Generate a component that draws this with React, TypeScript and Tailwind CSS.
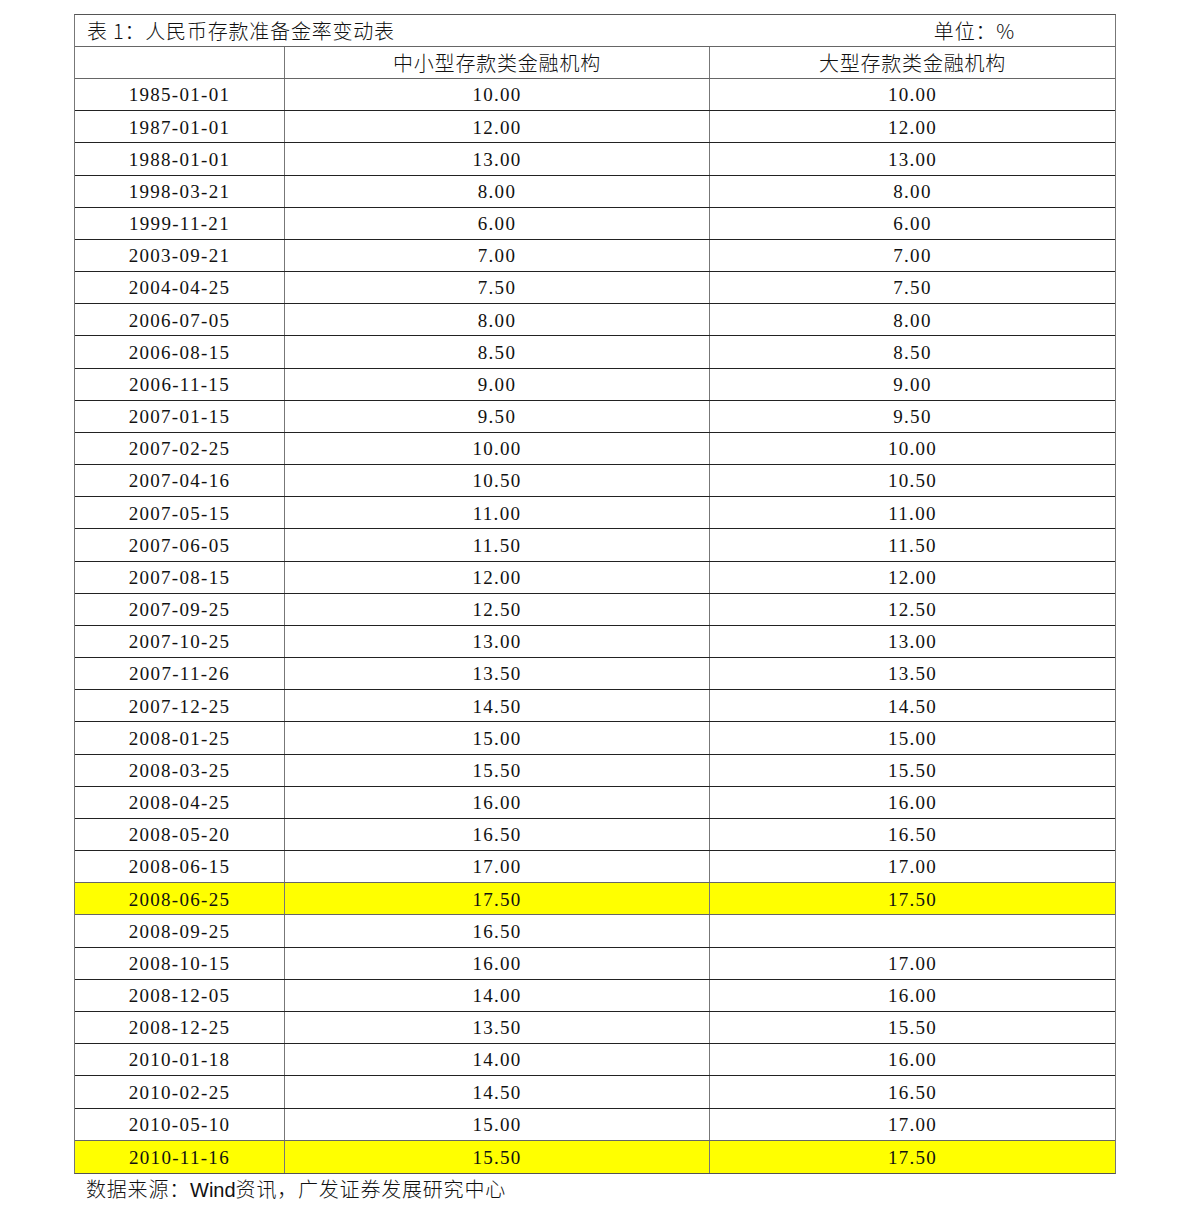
import React from "react";

const rows: [string, string, string, boolean?][] = [
  ["1985-01-01", "10.00", "10.00"],
  ["1987-01-01", "12.00", "12.00"],
  ["1988-01-01", "13.00", "13.00"],
  ["1998-03-21", "8.00", "8.00"],
  ["1999-11-21", "6.00", "6.00"],
  ["2003-09-21", "7.00", "7.00"],
  ["2004-04-25", "7.50", "7.50"],
  ["2006-07-05", "8.00", "8.00"],
  ["2006-08-15", "8.50", "8.50"],
  ["2006-11-15", "9.00", "9.00"],
  ["2007-01-15", "9.50", "9.50"],
  ["2007-02-25", "10.00", "10.00"],
  ["2007-04-16", "10.50", "10.50"],
  ["2007-05-15", "11.00", "11.00"],
  ["2007-06-05", "11.50", "11.50"],
  ["2007-08-15", "12.00", "12.00"],
  ["2007-09-25", "12.50", "12.50"],
  ["2007-10-25", "13.00", "13.00"],
  ["2007-11-26", "13.50", "13.50"],
  ["2007-12-25", "14.50", "14.50"],
  ["2008-01-25", "15.00", "15.00"],
  ["2008-03-25", "15.50", "15.50"],
  ["2008-04-25", "16.00", "16.00"],
  ["2008-05-20", "16.50", "16.50"],
  ["2008-06-15", "17.00", "17.00"],
  ["2008-06-25", "17.50", "17.50", true],
  ["2008-09-25", "16.50", ""],
  ["2008-10-15", "16.00", "17.00"],
  ["2008-12-05", "14.00", "16.00"],
  ["2008-12-25", "13.50", "15.50"],
  ["2010-01-18", "14.00", "16.00"],
  ["2010-02-25", "14.50", "16.50"],
  ["2010-05-10", "15.00", "17.00"],
  ["2010-11-16", "15.50", "17.50", true],
];

const cjk = "font-['Noto_Sans_CJK_SC',sans-serif]";
const num = "font-['Liberation_Serif','Noto_Sans_CJK_SC',serif] text-[19px] tracking-[1.3px]";

export default function App() {
  return (
    <div className="bg-white w-[1191px] h-[1222px] pt-[14px] pl-[74px] text-[#111]">
      <div className="w-[1042px] border border-[#555] border-l-[#777] border-r-[#777]">
        <div className={`h-[32px] flex items-center justify-between border-b border-[#666] pl-[12px] pr-[100px] pt-[1px] text-[20px] tracking-[0.8px] font-light ${cjk}`}>
          <span>表 1：人民币存款准备金率变动表</span>
          <span>单位：%</span>
        </div>
        <div className={`h-[32px] flex border-b border-[#666] text-[20px] tracking-[0.8px] font-light ${cjk}`}>
          <div className="w-[210px] border-r border-[#777]" />
          <div className="w-[425px] border-r border-[#777] flex items-center justify-center">中小型存款类金融机构</div>
          <div className="flex-1 flex items-center justify-center">大型存款类金融机构</div>
        </div>
        {rows.map(([d, a, b, hl], i) => (
          <div
            key={d}
            className={`h-[32.18px] flex ${i < rows.length - 1 ? "border-b" : ""} ${hl || rows[i + 1]?.[3] ? "border-[#666]" : "border-[#222]"} ${hl ? "bg-[#ffff00]" : ""} ${num}`}
          >
            <div className="w-[210px] border-r border-[#777] flex items-center justify-center pt-[2px]">{d}</div>
            <div className="w-[425px] border-r border-[#777] flex items-center justify-center pt-[2px]">{a}</div>
            <div className="flex-1 flex items-center justify-center pt-[2px]">{b}</div>
          </div>
        ))}
      </div>
      <div className={`pl-[12px] text-[20px] leading-[30px] tracking-[0.8px] font-light ${cjk}`}>
        数据来源：<span className="font-['Liberation_Sans',sans-serif] font-normal tracking-normal">Wind</span>资讯，广发证券发展研究中心
      </div>
    </div>
  );
}
